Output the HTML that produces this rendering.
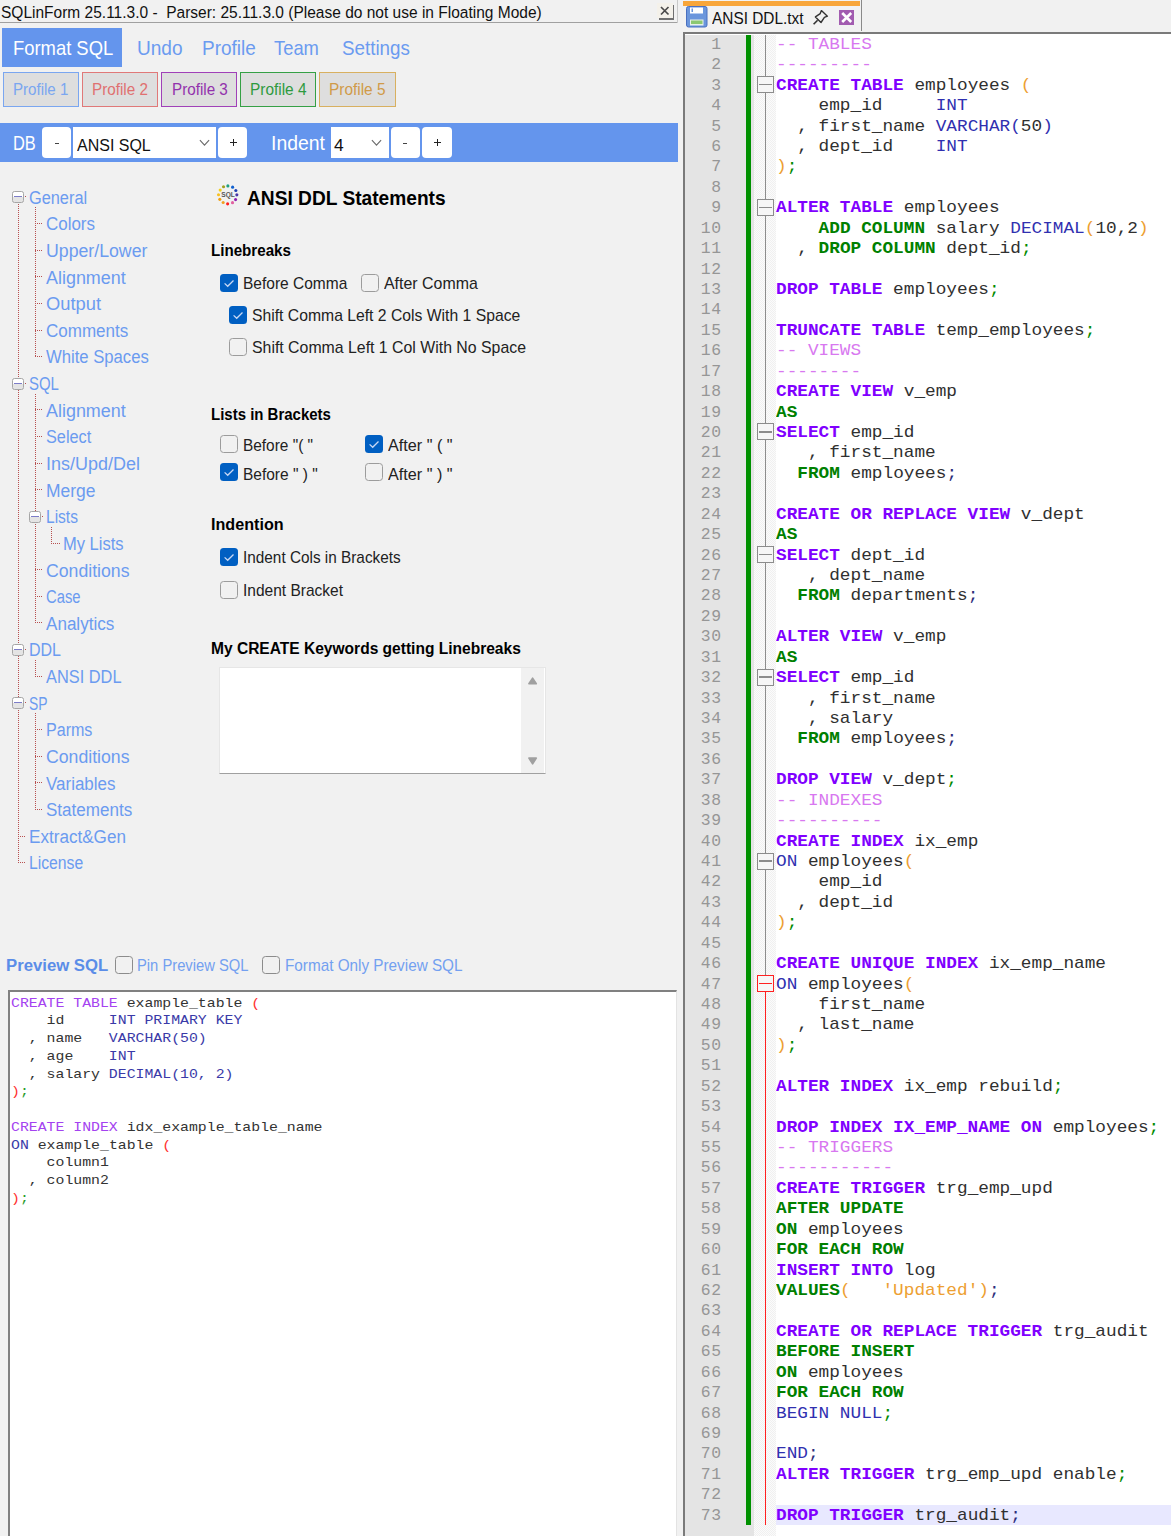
<!DOCTYPE html>
<html><head><meta charset="utf-8"><style>
html,body{margin:0;padding:0;}
body{width:1171px;height:1536px;position:relative;overflow:hidden;background:#f1f1f1;font-family:"Liberation Sans",sans-serif;}
.t{position:absolute;white-space:pre;line-height:0;transform-origin:0 0;}
.m{position:absolute;white-space:pre;line-height:0;transform-origin:0 0;font-family:"Liberation Mono",monospace;}
</style></head><body>
<div class="t" style="left:1.00px;top:13.20px;font-size:16.90px;color:#111;transform:scaleX(0.9180);">SQLinForm 25.11.3.0 -  Parser: 25.11.3.0 (Please do not use in Floating Mode)</div>
<div style="position:absolute;left:0.00px;top:22.00px;width:678.00px;height:1.00px;background:#a0a0a0"></div>
<div style="position:absolute;left:677.00px;top:0.00px;width:1.00px;height:23.00px;background:#c8c8c8"></div>
<div style="position:absolute;left:659.00px;top:5.00px;width:15.00px;height:14.50px;background:#707070"></div>
<div style="position:absolute;left:657.00px;top:3.00px;width:15.50px;height:15.00px;background:#f4f1ea"></div>
<svg style="position:absolute;left:659px;top:5px" width="12" height="12"><path d="M2 2L9.5 9.5M9.5 2L2 9.5" stroke="#4a4a4a" stroke-width="1.7"/></svg>
<div style="position:absolute;left:2.00px;top:28.00px;width:120.00px;height:38.50px;background:#6495ed"></div>
<div class="t" style="left:12.80px;top:47.80px;font-size:20.60px;color:#fff;transform:scaleX(0.8932);">Format SQL</div>
<div class="t" style="left:136.70px;top:47.90px;font-size:20.90px;color:#6b9bf0;transform:scaleX(0.9126);">Undo</div>
<div class="t" style="left:201.50px;top:47.90px;font-size:20.90px;color:#6b9bf0;transform:scaleX(0.9081);">Profile</div>
<div class="t" style="left:273.70px;top:47.90px;font-size:20.90px;color:#6b9bf0;transform:scaleX(0.8785);">Team</div>
<div class="t" style="left:341.60px;top:47.90px;font-size:20.90px;color:#6b9bf0;transform:scaleX(0.8991);">Settings</div>
<div style="position:absolute;left:3.00px;top:72.00px;width:76.00px;height:34.50px;background:#dedede;border:1.5px solid #7aa6f0;box-sizing:border-box"></div>
<div class="t" style="left:13.30px;top:89.30px;font-size:17.30px;color:#7aa6f0;transform:scaleX(0.8729);">Profile 1</div>
<div style="position:absolute;left:82.00px;top:72.00px;width:76.00px;height:34.50px;background:#dedede;border:1.5px solid #e07878;box-sizing:border-box"></div>
<div class="t" style="left:92.20px;top:89.30px;font-size:17.30px;color:#e07070;transform:scaleX(0.8824);">Profile 2</div>
<div style="position:absolute;left:161.00px;top:72.00px;width:76.00px;height:34.50px;background:#dedede;border:1.5px solid #a040b8;box-sizing:border-box"></div>
<div class="t" style="left:171.70px;top:89.30px;font-size:17.30px;color:#9232ac;transform:scaleX(0.8808);">Profile 3</div>
<div style="position:absolute;left:240.00px;top:72.00px;width:76.00px;height:34.50px;background:#dedede;border:1.5px solid #35a045;box-sizing:border-box"></div>
<div class="t" style="left:250.40px;top:89.30px;font-size:17.30px;color:#2e9a3e;transform:scaleX(0.8918);">Profile 4</div>
<div style="position:absolute;left:319.00px;top:72.00px;width:76.50px;height:34.50px;background:#dedede;border:1.5px solid #d8b060;box-sizing:border-box"></div>
<div class="t" style="left:329.00px;top:89.30px;font-size:17.30px;color:#d09a48;transform:scaleX(0.8918);">Profile 5</div>
<div style="position:absolute;left:0.00px;top:123.00px;width:678.00px;height:38.50px;background:#6495ed"></div>
<div class="t" style="left:13.00px;top:143.20px;font-size:19.60px;color:#fff;transform:scaleX(0.8374);">DB</div>
<div style="position:absolute;left:41.80px;top:127.20px;width:29.70px;height:31.30px;background:#fff;border-radius:4px"></div>
<div style="position:absolute;left:54.60px;top:143.00px;width:4.00px;height:1.20px;background:#444"></div>
<div style="position:absolute;left:73.10px;top:127.20px;width:143.20px;height:31.30px;background:#fff"></div>
<div class="t" style="left:77.20px;top:144.70px;font-size:17.40px;color:#111;transform:scaleX(0.9195);">ANSI SQL</div>
<svg style="position:absolute;left:198px;top:137px" width="13" height="10"><path d="M1.9 3.2L6.5 8.2L11.1 3.2" stroke="#6a6a6a" stroke-width="1.1" fill="none"/></svg>
<div style="position:absolute;left:218.00px;top:127.20px;width:29.40px;height:31.30px;background:#fff;border-radius:4px"></div>
<div style="position:absolute;left:230.00px;top:142.00px;width:7.00px;height:1.10px;background:#222"></div>
<div style="position:absolute;left:233.00px;top:139.00px;width:1.10px;height:7.20px;background:#222"></div>
<div class="t" style="left:271.00px;top:143.40px;font-size:20.30px;color:#fff;transform:scaleX(0.9567);">Indent</div>
<div style="position:absolute;left:331.00px;top:127.20px;width:57.80px;height:31.30px;background:#fff"></div>
<div class="t" style="left:334.00px;top:144.70px;font-size:17.40px;color:#111;">4</div>
<svg style="position:absolute;left:370px;top:137px" width="13" height="10"><path d="M1.9 3.2L6.5 8.2L11.1 3.2" stroke="#6a6a6a" stroke-width="1.1" fill="none"/></svg>
<div style="position:absolute;left:390.60px;top:127.20px;width:29.30px;height:31.30px;background:#fff;border-radius:4px"></div>
<div style="position:absolute;left:402.60px;top:143.00px;width:4.00px;height:1.20px;background:#444"></div>
<div style="position:absolute;left:422.30px;top:127.20px;width:29.70px;height:31.30px;background:#fff;border-radius:4px"></div>
<div style="position:absolute;left:434.00px;top:142.00px;width:7.00px;height:1.10px;background:#222"></div>
<div style="position:absolute;left:437.00px;top:139.00px;width:1.10px;height:7.20px;background:#222"></div>
<div class="t" style="left:29.00px;top:197.70px;font-size:18.00px;color:#6b9bf0;transform:scaleX(0.9073);">General</div>
<div class="t" style="left:45.80px;top:224.33px;font-size:18.00px;color:#6b9bf0;transform:scaleX(0.9420);">Colors</div>
<div class="t" style="left:45.80px;top:250.96px;font-size:18.00px;color:#6b9bf0;transform:scaleX(0.9839);">Upper/Lower</div>
<div class="t" style="left:45.80px;top:277.59px;font-size:18.00px;color:#6b9bf0;transform:scaleX(0.9957);">Alignment</div>
<div class="t" style="left:45.80px;top:304.22px;font-size:18.00px;color:#6b9bf0;transform:scaleX(1.0178);">Output</div>
<div class="t" style="left:45.80px;top:330.85px;font-size:18.00px;color:#6b9bf0;transform:scaleX(0.9457);">Comments</div>
<div class="t" style="left:45.80px;top:357.48px;font-size:18.00px;color:#6b9bf0;transform:scaleX(0.9257);">White Spaces</div>
<div class="t" style="left:29.00px;top:384.11px;font-size:18.00px;color:#6b9bf0;transform:scaleX(0.8301);">SQL</div>
<div class="t" style="left:45.80px;top:410.74px;font-size:18.00px;color:#6b9bf0;transform:scaleX(0.9957);">Alignment</div>
<div class="t" style="left:45.80px;top:437.37px;font-size:18.00px;color:#6b9bf0;transform:scaleX(0.9035);">Select</div>
<div class="t" style="left:45.80px;top:464.00px;font-size:18.00px;color:#6b9bf0;transform:scaleX(0.9984);">Ins/Upd/Del</div>
<div class="t" style="left:45.80px;top:490.63px;font-size:18.00px;color:#6b9bf0;transform:scaleX(0.9702);">Merge</div>
<div class="t" style="left:45.80px;top:517.26px;font-size:18.00px;color:#6b9bf0;transform:scaleX(0.8619);">Lists</div>
<div class="t" style="left:63.20px;top:543.89px;font-size:18.00px;color:#6b9bf0;transform:scaleX(0.9181);">My Lists</div>
<div class="t" style="left:45.80px;top:570.52px;font-size:18.00px;color:#6b9bf0;transform:scaleX(0.9817);">Conditions</div>
<div class="t" style="left:45.80px;top:597.15px;font-size:18.00px;color:#6b9bf0;transform:scaleX(0.8210);">Case</div>
<div class="t" style="left:45.80px;top:623.78px;font-size:18.00px;color:#6b9bf0;transform:scaleX(0.9482);">Analytics</div>
<div class="t" style="left:29.00px;top:650.41px;font-size:18.00px;color:#6b9bf0;transform:scaleX(0.8886);">DDL</div>
<div class="t" style="left:45.80px;top:677.04px;font-size:18.00px;color:#6b9bf0;transform:scaleX(0.9094);">ANSI DDL</div>
<div class="t" style="left:29.00px;top:703.67px;font-size:18.00px;color:#6b9bf0;transform:scaleX(0.7705);">SP</div>
<div class="t" style="left:45.80px;top:730.30px;font-size:18.00px;color:#6b9bf0;transform:scaleX(0.8922);">Parms</div>
<div class="t" style="left:45.80px;top:756.93px;font-size:18.00px;color:#6b9bf0;transform:scaleX(0.9817);">Conditions</div>
<div class="t" style="left:45.80px;top:783.56px;font-size:18.00px;color:#6b9bf0;transform:scaleX(0.9429);">Variables</div>
<div class="t" style="left:45.80px;top:810.19px;font-size:18.00px;color:#6b9bf0;transform:scaleX(0.9467);">Statements</div>
<div class="t" style="left:29.00px;top:836.82px;font-size:18.00px;color:#6b9bf0;transform:scaleX(0.9496);">Extract&amp;Gen</div>
<div class="t" style="left:29.00px;top:863.45px;font-size:18.00px;color:#6b9bf0;transform:scaleX(0.8736);">License</div>
<div style="position:absolute;left:35.0px;top:223.0px;width:7.8px;height:1px;background:repeating-linear-gradient(to right,#b85050 0 1px,transparent 1px 2px)"></div>
<div style="position:absolute;left:35.0px;top:250.0px;width:7.8px;height:1px;background:repeating-linear-gradient(to right,#b85050 0 1px,transparent 1px 2px)"></div>
<div style="position:absolute;left:35.0px;top:276.0px;width:7.8px;height:1px;background:repeating-linear-gradient(to right,#b85050 0 1px,transparent 1px 2px)"></div>
<div style="position:absolute;left:35.0px;top:303.0px;width:7.8px;height:1px;background:repeating-linear-gradient(to right,#b85050 0 1px,transparent 1px 2px)"></div>
<div style="position:absolute;left:35.0px;top:330.0px;width:7.8px;height:1px;background:repeating-linear-gradient(to right,#b85050 0 1px,transparent 1px 2px)"></div>
<div style="position:absolute;left:35.0px;top:356.0px;width:7.8px;height:1px;background:repeating-linear-gradient(to right,#b85050 0 1px,transparent 1px 2px)"></div>
<div style="position:absolute;left:35.0px;top:409.0px;width:7.8px;height:1px;background:repeating-linear-gradient(to right,#b85050 0 1px,transparent 1px 2px)"></div>
<div style="position:absolute;left:35.0px;top:436.0px;width:7.8px;height:1px;background:repeating-linear-gradient(to right,#b85050 0 1px,transparent 1px 2px)"></div>
<div style="position:absolute;left:35.0px;top:463.0px;width:7.8px;height:1px;background:repeating-linear-gradient(to right,#b85050 0 1px,transparent 1px 2px)"></div>
<div style="position:absolute;left:35.0px;top:489.0px;width:7.8px;height:1px;background:repeating-linear-gradient(to right,#b85050 0 1px,transparent 1px 2px)"></div>
<div style="position:absolute;left:51.0px;top:543.0px;width:9.2px;height:1px;background:repeating-linear-gradient(to right,#b85050 0 1px,transparent 1px 2px)"></div>
<div style="position:absolute;left:35.0px;top:569.0px;width:7.8px;height:1px;background:repeating-linear-gradient(to right,#b85050 0 1px,transparent 1px 2px)"></div>
<div style="position:absolute;left:35.0px;top:596.0px;width:7.8px;height:1px;background:repeating-linear-gradient(to right,#b85050 0 1px,transparent 1px 2px)"></div>
<div style="position:absolute;left:35.0px;top:622.0px;width:7.8px;height:1px;background:repeating-linear-gradient(to right,#b85050 0 1px,transparent 1px 2px)"></div>
<div style="position:absolute;left:35.0px;top:676.0px;width:7.8px;height:1px;background:repeating-linear-gradient(to right,#b85050 0 1px,transparent 1px 2px)"></div>
<div style="position:absolute;left:35.0px;top:729.0px;width:7.8px;height:1px;background:repeating-linear-gradient(to right,#b85050 0 1px,transparent 1px 2px)"></div>
<div style="position:absolute;left:35.0px;top:756.0px;width:7.8px;height:1px;background:repeating-linear-gradient(to right,#b85050 0 1px,transparent 1px 2px)"></div>
<div style="position:absolute;left:35.0px;top:782.0px;width:7.8px;height:1px;background:repeating-linear-gradient(to right,#b85050 0 1px,transparent 1px 2px)"></div>
<div style="position:absolute;left:35.0px;top:809.0px;width:7.8px;height:1px;background:repeating-linear-gradient(to right,#b85050 0 1px,transparent 1px 2px)"></div>
<div style="position:absolute;left:18.0px;top:836.0px;width:8.0px;height:1px;background:repeating-linear-gradient(to right,#b85050 0 1px,transparent 1px 2px)"></div>
<div style="position:absolute;left:18.0px;top:862.0px;width:8.0px;height:1px;background:repeating-linear-gradient(to right,#b85050 0 1px,transparent 1px 2px)"></div>
<div style="position:absolute;left:18.0px;top:202.0px;width:1px;height:661.0px;background:repeating-linear-gradient(to bottom,#b85050 0 1px,transparent 1px 2px)"></div>
<div style="position:absolute;left:35.0px;top:207.0px;width:1px;height:150.0px;background:repeating-linear-gradient(to bottom,#b85050 0 1px,transparent 1px 2px)"></div>
<div style="position:absolute;left:35.0px;top:394.0px;width:1px;height:229.0px;background:repeating-linear-gradient(to bottom,#b85050 0 1px,transparent 1px 2px)"></div>
<div style="position:absolute;left:35.0px;top:660.0px;width:1px;height:17.0px;background:repeating-linear-gradient(to bottom,#b85050 0 1px,transparent 1px 2px)"></div>
<div style="position:absolute;left:35.0px;top:713.0px;width:1px;height:97.0px;background:repeating-linear-gradient(to bottom,#b85050 0 1px,transparent 1px 2px)"></div>
<div style="position:absolute;left:51.0px;top:527.0px;width:1px;height:17.0px;background:repeating-linear-gradient(to bottom,#b85050 0 1px,transparent 1px 2px)"></div>
<div style="position:absolute;left:23.0px;top:196.0px;width:3.0px;height:1px;background:repeating-linear-gradient(to right,#b85050 0 1px,transparent 1px 2px)"></div>
<div style="position:absolute;left:12.3px;top:191.0px;width:11.5px;height:11.7px;border:1.3px solid #a6a6a6;border-radius:2.5px;box-sizing:border-box;background:linear-gradient(#fff 0 50%,#e4e4e4 50% 100%)"></div>
<div style="position:absolute;left:14.20px;top:195.90px;width:7.70px;height:1.30px;background:#7c7cc8"></div>
<div style="position:absolute;left:23.0px;top:383.0px;width:3.0px;height:1px;background:repeating-linear-gradient(to right,#b85050 0 1px,transparent 1px 2px)"></div>
<div style="position:absolute;left:12.3px;top:378.0px;width:11.5px;height:11.7px;border:1.3px solid #a6a6a6;border-radius:2.5px;box-sizing:border-box;background:linear-gradient(#fff 0 50%,#e4e4e4 50% 100%)"></div>
<div style="position:absolute;left:14.20px;top:382.90px;width:7.70px;height:1.30px;background:#7c7cc8"></div>
<div style="position:absolute;left:40.0px;top:516.0px;width:2.8px;height:1px;background:repeating-linear-gradient(to right,#b85050 0 1px,transparent 1px 2px)"></div>
<div style="position:absolute;left:29.3px;top:511.0px;width:11.5px;height:11.7px;border:1.3px solid #a6a6a6;border-radius:2.5px;box-sizing:border-box;background:linear-gradient(#fff 0 50%,#e4e4e4 50% 100%)"></div>
<div style="position:absolute;left:31.20px;top:515.90px;width:7.70px;height:1.30px;background:#7c7cc8"></div>
<div style="position:absolute;left:23.0px;top:649.0px;width:3.0px;height:1px;background:repeating-linear-gradient(to right,#b85050 0 1px,transparent 1px 2px)"></div>
<div style="position:absolute;left:12.3px;top:644.0px;width:11.5px;height:11.7px;border:1.3px solid #a6a6a6;border-radius:2.5px;box-sizing:border-box;background:linear-gradient(#fff 0 50%,#e4e4e4 50% 100%)"></div>
<div style="position:absolute;left:14.20px;top:648.90px;width:7.70px;height:1.30px;background:#7c7cc8"></div>
<div style="position:absolute;left:23.0px;top:702.0px;width:3.0px;height:1px;background:repeating-linear-gradient(to right,#b85050 0 1px,transparent 1px 2px)"></div>
<div style="position:absolute;left:12.3px;top:697.0px;width:11.5px;height:11.7px;border:1.3px solid #a6a6a6;border-radius:2.5px;box-sizing:border-box;background:linear-gradient(#fff 0 50%,#e4e4e4 50% 100%)"></div>
<div style="position:absolute;left:14.20px;top:701.90px;width:7.70px;height:1.30px;background:#7c7cc8"></div>
<svg style="position:absolute;left:212px;top:180px" width="30" height="30" viewBox="0 0 30 30"><circle cx="15.89" cy="5.89" r="1.55" fill="#20a080"/><circle cx="20.63" cy="7.17" r="1.55" fill="#1060d0"/><circle cx="23.83" cy="10.50" r="1.55" fill="#2040b0"/><circle cx="24.85" cy="14.86" r="1.55" fill="#4a3aa8"/><circle cx="23.57" cy="19.60" r="1.55" fill="#9020b0"/><circle cx="20.50" cy="22.67" r="1.55" fill="#e060a0"/><circle cx="15.63" cy="23.83" r="1.55" fill="#ff2020"/><circle cx="11.15" cy="22.55" r="1.55" fill="#f0a020"/><circle cx="7.81" cy="19.34" r="1.55" fill="#f0a010"/><circle cx="6.53" cy="14.73" r="1.55" fill="#f8c020"/><circle cx="8.20" cy="10.12" r="1.55" fill="#f0d020"/><circle cx="11.53" cy="6.79" r="1.55" fill="#a0a020"/><text x="16.14" y="17.04" font-size="6.6" font-weight="bold" text-anchor="middle" font-family="Liberation Sans" fill="#555">SQL</text></svg>
<div class="t" style="left:246.60px;top:197.70px;font-size:20.60px;color:#000;font-weight:bold;transform:scaleX(0.9299);">ANSI DDL Statements</div>
<div class="t" style="left:211.10px;top:251.40px;font-size:16.00px;color:#000;font-weight:bold;transform:scaleX(0.9457);">Linebreaks</div>
<div style="position:absolute;left:220.1px;top:274.3px;width:18px;height:18px;border-radius:3.5px;background:#005fc2"><svg width="18" height="18" style="position:absolute;left:0;top:0"><path d="M4.6 9.4L7.7 12.3L13.5 6.5" stroke="#c8d8f4" stroke-width="1.3" fill="none"/></svg></div>
<div class="t" style="left:243.30px;top:283.60px;font-size:17.00px;color:#222;transform:scaleX(0.9123);">Before Comma</div>
<div style="position:absolute;left:360.7px;top:274.3px;width:18px;height:18px;border-radius:3.5px;border:1.4px solid #9c9c9c;box-sizing:border-box"></div>
<div class="t" style="left:383.80px;top:283.60px;font-size:17.00px;color:#222;transform:scaleX(0.9367);">After Comma</div>
<div style="position:absolute;left:228.9px;top:306.1px;width:18px;height:18px;border-radius:3.5px;background:#005fc2"><svg width="18" height="18" style="position:absolute;left:0;top:0"><path d="M4.6 9.4L7.7 12.3L13.5 6.5" stroke="#c8d8f4" stroke-width="1.3" fill="none"/></svg></div>
<div class="t" style="left:251.70px;top:316.40px;font-size:17.00px;color:#222;transform:scaleX(0.9249);">Shift Comma Left 2 Cols With 1 Space</div>
<div style="position:absolute;left:228.9px;top:338.0px;width:18px;height:18px;border-radius:3.5px;border:1.4px solid #9c9c9c;box-sizing:border-box"></div>
<div class="t" style="left:251.70px;top:348.20px;font-size:17.00px;color:#222;transform:scaleX(0.9324);">Shift Comma Left 1 Col With No Space</div>
<div class="t" style="left:211.40px;top:414.60px;font-size:16.00px;color:#000;font-weight:bold;transform:scaleX(0.9363);">Lists in Brackets</div>
<div style="position:absolute;left:220.3px;top:434.8px;width:18px;height:18px;border-radius:3.5px;border:1.4px solid #9c9c9c;box-sizing:border-box"></div>
<div class="t" style="left:243.00px;top:446.30px;font-size:17.00px;color:#222;transform:scaleX(0.9060);">Before &quot;( &quot;</div>
<div style="position:absolute;left:365.1px;top:434.8px;width:18px;height:18px;border-radius:3.5px;background:#005fc2"><svg width="18" height="18" style="position:absolute;left:0;top:0"><path d="M4.6 9.4L7.7 12.3L13.5 6.5" stroke="#c8d8f4" stroke-width="1.3" fill="none"/></svg></div>
<div class="t" style="left:387.50px;top:446.30px;font-size:17.00px;color:#222;transform:scaleX(0.9513);">After &quot; ( &quot;</div>
<div style="position:absolute;left:220.3px;top:463.1px;width:18px;height:18px;border-radius:3.5px;background:#005fc2"><svg width="18" height="18" style="position:absolute;left:0;top:0"><path d="M4.6 9.4L7.7 12.3L13.5 6.5" stroke="#c8d8f4" stroke-width="1.3" fill="none"/></svg></div>
<div class="t" style="left:243.00px;top:474.50px;font-size:17.00px;color:#222;transform:scaleX(0.9111);">Before &quot; ) &quot;</div>
<div style="position:absolute;left:365.1px;top:463.1px;width:18px;height:18px;border-radius:3.5px;border:1.4px solid #9c9c9c;box-sizing:border-box"></div>
<div class="t" style="left:387.50px;top:474.50px;font-size:17.00px;color:#222;transform:scaleX(0.9513);">After &quot; ) &quot;</div>
<div class="t" style="left:211.40px;top:525.30px;font-size:16.00px;color:#000;font-weight:bold;transform:scaleX(1.0085);">Indention</div>
<div style="position:absolute;left:220.3px;top:547.6px;width:18px;height:18px;border-radius:3.5px;background:#005fc2"><svg width="18" height="18" style="position:absolute;left:0;top:0"><path d="M4.6 9.4L7.7 12.3L13.5 6.5" stroke="#c8d8f4" stroke-width="1.3" fill="none"/></svg></div>
<div class="t" style="left:243.00px;top:558.20px;font-size:17.00px;color:#222;transform:scaleX(0.9021);">Indent Cols in Brackets</div>
<div style="position:absolute;left:220.3px;top:580.5px;width:18px;height:18px;border-radius:3.5px;border:1.4px solid #9c9c9c;box-sizing:border-box"></div>
<div class="t" style="left:243.00px;top:590.70px;font-size:17.00px;color:#222;transform:scaleX(0.9122);">Indent Bracket</div>
<div class="t" style="left:211.40px;top:649.20px;font-size:16.00px;color:#000;font-weight:bold;transform:scaleX(0.9715);">My CREATE Keywords getting Linebreaks</div>
<div style="position:absolute;left:219.00px;top:667.00px;width:326.50px;height:106.80px;background:#fff;border:1px solid #e6e6e6;border-bottom:1px solid #a0a0a0;box-sizing:border-box"></div>
<div style="position:absolute;left:521.20px;top:668.00px;width:23.30px;height:104.80px;background:#f1f1f1"></div>
<svg style="position:absolute;left:527px;top:675px" width="12" height="92"><path d="M1.9 8.8L5.6 3.2L9.3 8.8Z" fill="#a0a0a0" stroke="#a0a0a0" stroke-width="1.6" stroke-linejoin="round"/><path d="M1.9 83.1L5.6 88.9L9.3 83.1Z" fill="#a0a0a0" stroke="#a0a0a0" stroke-width="1.6" stroke-linejoin="round"/></svg>
<div class="t" style="left:5.70px;top:965.10px;font-size:17.40px;color:#5b8de8;font-weight:bold;transform:scaleX(0.9616);">Preview SQL</div>
<div style="position:absolute;left:114.5px;top:955.8px;width:18px;height:18px;border-radius:3.5px;border:1.5px solid #8c8c8c;box-sizing:border-box"></div>
<div class="t" style="left:137.30px;top:965.90px;font-size:17.00px;color:#73a0f0;transform:scaleX(0.8677);">Pin Preview SQL</div>
<div style="position:absolute;left:262.3px;top:955.8px;width:18px;height:18px;border-radius:3.5px;border:1.5px solid #8c8c8c;box-sizing:border-box"></div>
<div class="t" style="left:284.80px;top:965.90px;font-size:17.00px;color:#73a0f0;transform:scaleX(0.8990);">Format Only Preview SQL</div>
<div style="position:absolute;left:8.00px;top:990.00px;width:669.00px;height:546.00px;background:#fff;border-left:2px solid #808080;border-top:2px solid #808080;border-right:1px solid #e3e3e3;box-sizing:border-box"></div>
<div class="m" style="left:10.5px;top:1003.50px;font-size:13.60px;transform:scaleX(1.0907)"><span style="color:#a442f0">CREATE TABLE</span><span style="color:#333"> example_table </span><span style="color:#ff3030">(</span></div>
<div class="m" style="left:10.5px;top:1021.26px;font-size:13.60px;transform:scaleX(1.0907)"><span style="color:#333">    id     </span><span style="color:#3a3aa8">INT PRIMARY KEY</span></div>
<div class="m" style="left:10.5px;top:1039.02px;font-size:13.60px;transform:scaleX(1.0907)"><span style="color:#333">  , name   </span><span style="color:#3a3aa8">VARCHAR(50)</span></div>
<div class="m" style="left:10.5px;top:1056.78px;font-size:13.60px;transform:scaleX(1.0907)"><span style="color:#333">  , age    </span><span style="color:#3a3aa8">INT</span></div>
<div class="m" style="left:10.5px;top:1074.54px;font-size:13.60px;transform:scaleX(1.0907)"><span style="color:#333">  , salary </span><span style="color:#3a3aa8">DECIMAL(10, 2)</span></div>
<div class="m" style="left:10.5px;top:1092.30px;font-size:13.60px;transform:scaleX(1.0907)"><span style="color:#ff3030">)</span><span style="color:#2a9a2a">;</span></div>
<div class="m" style="left:10.5px;top:1110.06px;font-size:13.60px;transform:scaleX(1.0907)"></div>
<div class="m" style="left:10.5px;top:1127.82px;font-size:13.60px;transform:scaleX(1.0907)"><span style="color:#a442f0">CREATE INDEX</span><span style="color:#333"> idx_example_table_name</span></div>
<div class="m" style="left:10.5px;top:1145.58px;font-size:13.60px;transform:scaleX(1.0907)"><span style="color:#3a3aa8">ON</span><span style="color:#333"> example_table </span><span style="color:#ff3030">(</span></div>
<div class="m" style="left:10.5px;top:1163.34px;font-size:13.60px;transform:scaleX(1.0907)"><span style="color:#333">    column1</span></div>
<div class="m" style="left:10.5px;top:1181.10px;font-size:13.60px;transform:scaleX(1.0907)"><span style="color:#333">  , column2</span></div>
<div class="m" style="left:10.5px;top:1198.86px;font-size:13.60px;transform:scaleX(1.0907)"><span style="color:#ff3030">)</span><span style="color:#2a9a2a">;</span></div>
<div style="position:absolute;left:678.00px;top:0.00px;width:493.00px;height:33.00px;background:#f1f1f1"></div>
<div style="position:absolute;left:683.00px;top:0.00px;width:179.00px;height:31.00px;background:#f2f2f2;border-right:1.6px solid #8a8a8a;box-sizing:border-box"></div>
<div style="position:absolute;left:683.00px;top:0.50px;width:177.00px;height:5.10px;background:#f8a63a"></div>
<svg style="position:absolute;left:686px;top:6px" width="22" height="22" viewBox="0 0 22 22"><rect x="0.5" y="0.5" width="20.5" height="20.5" rx="2" fill="#6b96dc" stroke="#4a70c0"/><rect x="4" y="1.5" width="13" height="6" fill="#fff"/><rect x="5.5" y="2.5" width="1.5" height="3.5" fill="#6b96dc"/><rect x="4" y="13.5" width="13.5" height="6" fill="#e8f0e8"/><rect x="5" y="14.5" width="11.5" height="3.5" fill="#8cc870"/></svg>
<div class="t" style="left:711.50px;top:19.00px;font-size:17.00px;color:#111;transform:scaleX(0.9052);">ANSI DDL.txt</div>
<svg style="position:absolute;left:805px;top:3px" width="30" height="30" viewBox="0 0 30 30"><path d="M16.4 7.6L22.4 13.2L19.4 14.4L16 19.5L10.4 13.9L15.2 10.6Z" stroke="#333" stroke-width="1.4" fill="none" stroke-linejoin="round"/><path d="M12.6 17.2L8.6 21.3" stroke="#333" stroke-width="1.6"/></svg>
<div style="position:absolute;left:839.00px;top:9.90px;width:14.70px;height:14.90px;background:#a25cb0"></div>
<svg style="position:absolute;left:839px;top:9.9px" width="15" height="15"><path d="M3.2 3L12.2 12M12.2 3L3.2 12" stroke="#fff" stroke-width="2.6"/></svg>
<div style="position:absolute;left:683.00px;top:31.60px;width:488.00px;height:1504.40px;background:#fff;border-left:2px solid #7a7a7a;border-top:2px solid #7a7a7a;box-sizing:border-box"></div>
<div style="position:absolute;left:685.00px;top:34.50px;width:69.00px;height:1501.50px;background:#e4e4e4"></div>
<div style="position:absolute;left:754.00px;top:34.50px;width:22.00px;height:1501.50px;background:repeating-conic-gradient(#f0f0f0 0 25%,#fbfbfb 0 50%) 0 0/2px 2px"></div>
<div style="position:absolute;left:746.00px;top:34.50px;width:5.00px;height:1490.49px;background:#009100"></div>
<div style="position:absolute;left:776.00px;top:1504.56px;width:395.00px;height:20.43px;background:#e8e8ff"></div>
<div style="position:absolute;left:765.00px;top:34.50px;width:1.00px;height:949.10px;background:#8c8c8c"></div>
<div style="position:absolute;left:765.00px;top:983.60px;width:1.00px;height:541.39px;background:#ff2020"></div>
<div style="position:absolute;left:756.8px;top:76.18px;width:17px;height:17px;border:1px solid #8c8c8c;background:#f6f6f6;box-sizing:border-box"></div>
<div style="position:absolute;left:758.80px;top:83.98px;width:13.00px;height:1.50px;background:#8c8c8c"></div>
<div style="position:absolute;left:756.8px;top:198.75px;width:17px;height:17px;border:1px solid #8c8c8c;background:#f6f6f6;box-sizing:border-box"></div>
<div style="position:absolute;left:758.80px;top:206.56px;width:13.00px;height:1.50px;background:#8c8c8c"></div>
<div style="position:absolute;left:756.8px;top:423.49px;width:17px;height:17px;border:1px solid #8c8c8c;background:#f6f6f6;box-sizing:border-box"></div>
<div style="position:absolute;left:758.80px;top:431.29px;width:13.00px;height:1.50px;background:#8c8c8c"></div>
<div style="position:absolute;left:756.8px;top:546.07px;width:17px;height:17px;border:1px solid #8c8c8c;background:#f6f6f6;box-sizing:border-box"></div>
<div style="position:absolute;left:758.80px;top:553.87px;width:13.00px;height:1.50px;background:#8c8c8c"></div>
<div style="position:absolute;left:756.8px;top:668.65px;width:17px;height:17px;border:1px solid #8c8c8c;background:#f6f6f6;box-sizing:border-box"></div>
<div style="position:absolute;left:758.80px;top:676.45px;width:13.00px;height:1.50px;background:#8c8c8c"></div>
<div style="position:absolute;left:756.8px;top:852.52px;width:17px;height:17px;border:1px solid #8c8c8c;background:#f6f6f6;box-sizing:border-box"></div>
<div style="position:absolute;left:758.80px;top:860.32px;width:13.00px;height:1.50px;background:#8c8c8c"></div>
<div style="position:absolute;left:756.8px;top:975.10px;width:17px;height:17px;border:1px solid #ff2020;background:#f6f6f6;box-sizing:border-box"></div>
<div style="position:absolute;left:758.80px;top:982.89px;width:13.00px;height:1.50px;background:#ff2020"></div>
<div class="m" style="left:690px;width:32px;text-align:right;top:44.80px;font-size:16.40px;letter-spacing:0.810px;color:#969696">1</div>
<div class="m" style="left:776px;top:44.80px;font-size:16.40px;transform:scaleX(1.0823)"><span style="color:#d878f0">-- TABLES</span></div>
<div class="m" style="left:690px;width:32px;text-align:right;top:65.23px;font-size:16.40px;letter-spacing:0.810px;color:#969696">2</div>
<div class="m" style="left:776px;top:65.23px;font-size:16.40px;transform:scaleX(1.0823)"><span style="color:#d878f0">---------</span></div>
<div class="m" style="left:690px;width:32px;text-align:right;top:85.66px;font-size:16.40px;letter-spacing:0.810px;color:#969696">3</div>
<div class="m" style="left:776px;top:85.66px;font-size:16.40px;transform:scaleX(1.0823)"><span style="color:#8000ff;font-weight:bold">CREATE TABLE</span><span style="color:#303030"> employees </span><span style="color:#eda032">(</span></div>
<div class="m" style="left:690px;width:32px;text-align:right;top:106.09px;font-size:16.40px;letter-spacing:0.810px;color:#969696">4</div>
<div class="m" style="left:776px;top:106.09px;font-size:16.40px;transform:scaleX(1.0823)"><span style="color:#303030">    emp_id     </span><span style="color:#3030b0">INT</span></div>
<div class="m" style="left:690px;width:32px;text-align:right;top:126.52px;font-size:16.40px;letter-spacing:0.810px;color:#969696">5</div>
<div class="m" style="left:776px;top:126.52px;font-size:16.40px;transform:scaleX(1.0823)"><span style="color:#303030">  , first_name </span><span style="color:#3030b0">VARCHAR(</span><span style="color:#303030">50</span><span style="color:#3030b0">)</span></div>
<div class="m" style="left:690px;width:32px;text-align:right;top:146.95px;font-size:16.40px;letter-spacing:0.810px;color:#969696">6</div>
<div class="m" style="left:776px;top:146.95px;font-size:16.40px;transform:scaleX(1.0823)"><span style="color:#303030">  , dept_id    </span><span style="color:#3030b0">INT</span></div>
<div class="m" style="left:690px;width:32px;text-align:right;top:167.38px;font-size:16.40px;letter-spacing:0.810px;color:#969696">7</div>
<div class="m" style="left:776px;top:167.38px;font-size:16.40px;transform:scaleX(1.0823)"><span style="color:#eda032">)</span><span style="color:#008a00">;</span></div>
<div class="m" style="left:690px;width:32px;text-align:right;top:187.81px;font-size:16.40px;letter-spacing:0.810px;color:#969696">8</div>
<div class="m" style="left:690px;width:32px;text-align:right;top:208.24px;font-size:16.40px;letter-spacing:0.810px;color:#969696">9</div>
<div class="m" style="left:776px;top:208.24px;font-size:16.40px;transform:scaleX(1.0823)"><span style="color:#8000ff;font-weight:bold">ALTER TABLE</span><span style="color:#303030"> employees</span></div>
<div class="m" style="left:690px;width:32px;text-align:right;top:228.67px;font-size:16.40px;letter-spacing:0.810px;color:#969696">10</div>
<div class="m" style="left:776px;top:228.67px;font-size:16.40px;transform:scaleX(1.0823)"><span style="color:#303030">    </span><span style="color:#008000;font-weight:bold">ADD COLUMN</span><span style="color:#303030"> salary </span><span style="color:#3030b0">DECIMAL</span><span style="color:#eda032">(</span><span style="color:#303030">10,2</span><span style="color:#eda032">)</span></div>
<div class="m" style="left:690px;width:32px;text-align:right;top:249.10px;font-size:16.40px;letter-spacing:0.810px;color:#969696">11</div>
<div class="m" style="left:776px;top:249.10px;font-size:16.40px;transform:scaleX(1.0823)"><span style="color:#303030">  , </span><span style="color:#008000;font-weight:bold">DROP COLUMN</span><span style="color:#303030"> dept_id</span><span style="color:#008a00">;</span></div>
<div class="m" style="left:690px;width:32px;text-align:right;top:269.53px;font-size:16.40px;letter-spacing:0.810px;color:#969696">12</div>
<div class="m" style="left:690px;width:32px;text-align:right;top:289.96px;font-size:16.40px;letter-spacing:0.810px;color:#969696">13</div>
<div class="m" style="left:776px;top:289.96px;font-size:16.40px;transform:scaleX(1.0823)"><span style="color:#8000ff;font-weight:bold">DROP TABLE</span><span style="color:#303030"> employees</span><span style="color:#008a00">;</span></div>
<div class="m" style="left:690px;width:32px;text-align:right;top:310.39px;font-size:16.40px;letter-spacing:0.810px;color:#969696">14</div>
<div class="m" style="left:690px;width:32px;text-align:right;top:330.82px;font-size:16.40px;letter-spacing:0.810px;color:#969696">15</div>
<div class="m" style="left:776px;top:330.82px;font-size:16.40px;transform:scaleX(1.0823)"><span style="color:#8000ff;font-weight:bold">TRUNCATE TABLE</span><span style="color:#303030"> temp_employees</span><span style="color:#008a00">;</span></div>
<div class="m" style="left:690px;width:32px;text-align:right;top:351.25px;font-size:16.40px;letter-spacing:0.810px;color:#969696">16</div>
<div class="m" style="left:776px;top:351.25px;font-size:16.40px;transform:scaleX(1.0823)"><span style="color:#d878f0">-- VIEWS</span></div>
<div class="m" style="left:690px;width:32px;text-align:right;top:371.68px;font-size:16.40px;letter-spacing:0.810px;color:#969696">17</div>
<div class="m" style="left:776px;top:371.68px;font-size:16.40px;transform:scaleX(1.0823)"><span style="color:#d878f0">--------</span></div>
<div class="m" style="left:690px;width:32px;text-align:right;top:392.11px;font-size:16.40px;letter-spacing:0.810px;color:#969696">18</div>
<div class="m" style="left:776px;top:392.11px;font-size:16.40px;transform:scaleX(1.0823)"><span style="color:#8000ff;font-weight:bold">CREATE VIEW</span><span style="color:#303030"> v_emp</span></div>
<div class="m" style="left:690px;width:32px;text-align:right;top:412.54px;font-size:16.40px;letter-spacing:0.810px;color:#969696">19</div>
<div class="m" style="left:776px;top:412.54px;font-size:16.40px;transform:scaleX(1.0823)"><span style="color:#008000;font-weight:bold">AS</span></div>
<div class="m" style="left:690px;width:32px;text-align:right;top:432.97px;font-size:16.40px;letter-spacing:0.810px;color:#969696">20</div>
<div class="m" style="left:776px;top:432.97px;font-size:16.40px;transform:scaleX(1.0823)"><span style="color:#8000ff;font-weight:bold">SELECT</span><span style="color:#303030"> emp_id</span></div>
<div class="m" style="left:690px;width:32px;text-align:right;top:453.40px;font-size:16.40px;letter-spacing:0.810px;color:#969696">21</div>
<div class="m" style="left:776px;top:453.40px;font-size:16.40px;transform:scaleX(1.0823)"><span style="color:#303030">   , first_name</span></div>
<div class="m" style="left:690px;width:32px;text-align:right;top:473.83px;font-size:16.40px;letter-spacing:0.810px;color:#969696">22</div>
<div class="m" style="left:776px;top:473.83px;font-size:16.40px;transform:scaleX(1.0823)"><span style="color:#303030">  </span><span style="color:#008000;font-weight:bold">FROM</span><span style="color:#303030"> employees</span><span style="color:#2d2d7a">;</span></div>
<div class="m" style="left:690px;width:32px;text-align:right;top:494.26px;font-size:16.40px;letter-spacing:0.810px;color:#969696">23</div>
<div class="m" style="left:690px;width:32px;text-align:right;top:514.69px;font-size:16.40px;letter-spacing:0.810px;color:#969696">24</div>
<div class="m" style="left:776px;top:514.69px;font-size:16.40px;transform:scaleX(1.0823)"><span style="color:#8000ff;font-weight:bold">CREATE OR REPLACE VIEW</span><span style="color:#303030"> v_dept</span></div>
<div class="m" style="left:690px;width:32px;text-align:right;top:535.12px;font-size:16.40px;letter-spacing:0.810px;color:#969696">25</div>
<div class="m" style="left:776px;top:535.12px;font-size:16.40px;transform:scaleX(1.0823)"><span style="color:#008000;font-weight:bold">AS</span></div>
<div class="m" style="left:690px;width:32px;text-align:right;top:555.55px;font-size:16.40px;letter-spacing:0.810px;color:#969696">26</div>
<div class="m" style="left:776px;top:555.55px;font-size:16.40px;transform:scaleX(1.0823)"><span style="color:#8000ff;font-weight:bold">SELECT</span><span style="color:#303030"> dept_id</span></div>
<div class="m" style="left:690px;width:32px;text-align:right;top:575.98px;font-size:16.40px;letter-spacing:0.810px;color:#969696">27</div>
<div class="m" style="left:776px;top:575.98px;font-size:16.40px;transform:scaleX(1.0823)"><span style="color:#303030">   , dept_name</span></div>
<div class="m" style="left:690px;width:32px;text-align:right;top:596.41px;font-size:16.40px;letter-spacing:0.810px;color:#969696">28</div>
<div class="m" style="left:776px;top:596.41px;font-size:16.40px;transform:scaleX(1.0823)"><span style="color:#303030">  </span><span style="color:#008000;font-weight:bold">FROM</span><span style="color:#303030"> departments</span><span style="color:#2d2d7a">;</span></div>
<div class="m" style="left:690px;width:32px;text-align:right;top:616.84px;font-size:16.40px;letter-spacing:0.810px;color:#969696">29</div>
<div class="m" style="left:690px;width:32px;text-align:right;top:637.27px;font-size:16.40px;letter-spacing:0.810px;color:#969696">30</div>
<div class="m" style="left:776px;top:637.27px;font-size:16.40px;transform:scaleX(1.0823)"><span style="color:#8000ff;font-weight:bold">ALTER VIEW</span><span style="color:#303030"> v_emp</span></div>
<div class="m" style="left:690px;width:32px;text-align:right;top:657.70px;font-size:16.40px;letter-spacing:0.810px;color:#969696">31</div>
<div class="m" style="left:776px;top:657.70px;font-size:16.40px;transform:scaleX(1.0823)"><span style="color:#008000;font-weight:bold">AS</span></div>
<div class="m" style="left:690px;width:32px;text-align:right;top:678.13px;font-size:16.40px;letter-spacing:0.810px;color:#969696">32</div>
<div class="m" style="left:776px;top:678.13px;font-size:16.40px;transform:scaleX(1.0823)"><span style="color:#8000ff;font-weight:bold">SELECT</span><span style="color:#303030"> emp_id</span></div>
<div class="m" style="left:690px;width:32px;text-align:right;top:698.56px;font-size:16.40px;letter-spacing:0.810px;color:#969696">33</div>
<div class="m" style="left:776px;top:698.56px;font-size:16.40px;transform:scaleX(1.0823)"><span style="color:#303030">   , first_name</span></div>
<div class="m" style="left:690px;width:32px;text-align:right;top:718.99px;font-size:16.40px;letter-spacing:0.810px;color:#969696">34</div>
<div class="m" style="left:776px;top:718.99px;font-size:16.40px;transform:scaleX(1.0823)"><span style="color:#303030">   , salary</span></div>
<div class="m" style="left:690px;width:32px;text-align:right;top:739.42px;font-size:16.40px;letter-spacing:0.810px;color:#969696">35</div>
<div class="m" style="left:776px;top:739.42px;font-size:16.40px;transform:scaleX(1.0823)"><span style="color:#303030">  </span><span style="color:#008000;font-weight:bold">FROM</span><span style="color:#303030"> employees</span><span style="color:#2d2d7a">;</span></div>
<div class="m" style="left:690px;width:32px;text-align:right;top:759.85px;font-size:16.40px;letter-spacing:0.810px;color:#969696">36</div>
<div class="m" style="left:690px;width:32px;text-align:right;top:780.28px;font-size:16.40px;letter-spacing:0.810px;color:#969696">37</div>
<div class="m" style="left:776px;top:780.28px;font-size:16.40px;transform:scaleX(1.0823)"><span style="color:#8000ff;font-weight:bold">DROP VIEW</span><span style="color:#303030"> v_dept</span><span style="color:#008a00">;</span></div>
<div class="m" style="left:690px;width:32px;text-align:right;top:800.71px;font-size:16.40px;letter-spacing:0.810px;color:#969696">38</div>
<div class="m" style="left:776px;top:800.71px;font-size:16.40px;transform:scaleX(1.0823)"><span style="color:#d878f0">-- INDEXES</span></div>
<div class="m" style="left:690px;width:32px;text-align:right;top:821.14px;font-size:16.40px;letter-spacing:0.810px;color:#969696">39</div>
<div class="m" style="left:776px;top:821.14px;font-size:16.40px;transform:scaleX(1.0823)"><span style="color:#d878f0">----------</span></div>
<div class="m" style="left:690px;width:32px;text-align:right;top:841.57px;font-size:16.40px;letter-spacing:0.810px;color:#969696">40</div>
<div class="m" style="left:776px;top:841.57px;font-size:16.40px;transform:scaleX(1.0823)"><span style="color:#8000ff;font-weight:bold">CREATE INDEX</span><span style="color:#303030"> ix_emp</span></div>
<div class="m" style="left:690px;width:32px;text-align:right;top:862.00px;font-size:16.40px;letter-spacing:0.810px;color:#969696">41</div>
<div class="m" style="left:776px;top:862.00px;font-size:16.40px;transform:scaleX(1.0823)"><span style="color:#3030b0">ON</span><span style="color:#303030"> employees</span><span style="color:#eda032">(</span></div>
<div class="m" style="left:690px;width:32px;text-align:right;top:882.43px;font-size:16.40px;letter-spacing:0.810px;color:#969696">42</div>
<div class="m" style="left:776px;top:882.43px;font-size:16.40px;transform:scaleX(1.0823)"><span style="color:#303030">    emp_id</span></div>
<div class="m" style="left:690px;width:32px;text-align:right;top:902.86px;font-size:16.40px;letter-spacing:0.810px;color:#969696">43</div>
<div class="m" style="left:776px;top:902.86px;font-size:16.40px;transform:scaleX(1.0823)"><span style="color:#303030">  , dept_id</span></div>
<div class="m" style="left:690px;width:32px;text-align:right;top:923.29px;font-size:16.40px;letter-spacing:0.810px;color:#969696">44</div>
<div class="m" style="left:776px;top:923.29px;font-size:16.40px;transform:scaleX(1.0823)"><span style="color:#eda032">)</span><span style="color:#008a00">;</span></div>
<div class="m" style="left:690px;width:32px;text-align:right;top:943.72px;font-size:16.40px;letter-spacing:0.810px;color:#969696">45</div>
<div class="m" style="left:690px;width:32px;text-align:right;top:964.15px;font-size:16.40px;letter-spacing:0.810px;color:#969696">46</div>
<div class="m" style="left:776px;top:964.15px;font-size:16.40px;transform:scaleX(1.0823)"><span style="color:#8000ff;font-weight:bold">CREATE UNIQUE INDEX</span><span style="color:#303030"> ix_emp_name</span></div>
<div class="m" style="left:690px;width:32px;text-align:right;top:984.58px;font-size:16.40px;letter-spacing:0.810px;color:#969696">47</div>
<div class="m" style="left:776px;top:984.58px;font-size:16.40px;transform:scaleX(1.0823)"><span style="color:#3030b0">ON</span><span style="color:#303030"> employees</span><span style="color:#eda032">(</span></div>
<div class="m" style="left:690px;width:32px;text-align:right;top:1005.01px;font-size:16.40px;letter-spacing:0.810px;color:#969696">48</div>
<div class="m" style="left:776px;top:1005.01px;font-size:16.40px;transform:scaleX(1.0823)"><span style="color:#303030">    first_name</span></div>
<div class="m" style="left:690px;width:32px;text-align:right;top:1025.44px;font-size:16.40px;letter-spacing:0.810px;color:#969696">49</div>
<div class="m" style="left:776px;top:1025.44px;font-size:16.40px;transform:scaleX(1.0823)"><span style="color:#303030">  , last_name</span></div>
<div class="m" style="left:690px;width:32px;text-align:right;top:1045.87px;font-size:16.40px;letter-spacing:0.810px;color:#969696">50</div>
<div class="m" style="left:776px;top:1045.87px;font-size:16.40px;transform:scaleX(1.0823)"><span style="color:#eda032">)</span><span style="color:#008a00">;</span></div>
<div class="m" style="left:690px;width:32px;text-align:right;top:1066.30px;font-size:16.40px;letter-spacing:0.810px;color:#969696">51</div>
<div class="m" style="left:690px;width:32px;text-align:right;top:1086.73px;font-size:16.40px;letter-spacing:0.810px;color:#969696">52</div>
<div class="m" style="left:776px;top:1086.73px;font-size:16.40px;transform:scaleX(1.0823)"><span style="color:#8000ff;font-weight:bold">ALTER INDEX</span><span style="color:#303030"> ix_emp rebuild</span><span style="color:#008a00">;</span></div>
<div class="m" style="left:690px;width:32px;text-align:right;top:1107.16px;font-size:16.40px;letter-spacing:0.810px;color:#969696">53</div>
<div class="m" style="left:690px;width:32px;text-align:right;top:1127.59px;font-size:16.40px;letter-spacing:0.810px;color:#969696">54</div>
<div class="m" style="left:776px;top:1127.59px;font-size:16.40px;transform:scaleX(1.0823)"><span style="color:#8000ff;font-weight:bold">DROP INDEX IX_EMP_NAME ON</span><span style="color:#303030"> employees</span><span style="color:#008a00">;</span></div>
<div class="m" style="left:690px;width:32px;text-align:right;top:1148.02px;font-size:16.40px;letter-spacing:0.810px;color:#969696">55</div>
<div class="m" style="left:776px;top:1148.02px;font-size:16.40px;transform:scaleX(1.0823)"><span style="color:#d878f0">-- TRIGGERS</span></div>
<div class="m" style="left:690px;width:32px;text-align:right;top:1168.45px;font-size:16.40px;letter-spacing:0.810px;color:#969696">56</div>
<div class="m" style="left:776px;top:1168.45px;font-size:16.40px;transform:scaleX(1.0823)"><span style="color:#d878f0">-----------</span></div>
<div class="m" style="left:690px;width:32px;text-align:right;top:1188.88px;font-size:16.40px;letter-spacing:0.810px;color:#969696">57</div>
<div class="m" style="left:776px;top:1188.88px;font-size:16.40px;transform:scaleX(1.0823)"><span style="color:#8000ff;font-weight:bold">CREATE TRIGGER</span><span style="color:#303030"> trg_emp_upd</span></div>
<div class="m" style="left:690px;width:32px;text-align:right;top:1209.31px;font-size:16.40px;letter-spacing:0.810px;color:#969696">58</div>
<div class="m" style="left:776px;top:1209.31px;font-size:16.40px;transform:scaleX(1.0823)"><span style="color:#008000;font-weight:bold">AFTER UPDATE</span></div>
<div class="m" style="left:690px;width:32px;text-align:right;top:1229.74px;font-size:16.40px;letter-spacing:0.810px;color:#969696">59</div>
<div class="m" style="left:776px;top:1229.74px;font-size:16.40px;transform:scaleX(1.0823)"><span style="color:#008000;font-weight:bold">ON</span><span style="color:#303030"> employees</span></div>
<div class="m" style="left:690px;width:32px;text-align:right;top:1250.17px;font-size:16.40px;letter-spacing:0.810px;color:#969696">60</div>
<div class="m" style="left:776px;top:1250.17px;font-size:16.40px;transform:scaleX(1.0823)"><span style="color:#008000;font-weight:bold">FOR EACH ROW</span></div>
<div class="m" style="left:690px;width:32px;text-align:right;top:1270.60px;font-size:16.40px;letter-spacing:0.810px;color:#969696">61</div>
<div class="m" style="left:776px;top:1270.60px;font-size:16.40px;transform:scaleX(1.0823)"><span style="color:#8000ff;font-weight:bold">INSERT INTO</span><span style="color:#303030"> log</span></div>
<div class="m" style="left:690px;width:32px;text-align:right;top:1291.03px;font-size:16.40px;letter-spacing:0.810px;color:#969696">62</div>
<div class="m" style="left:776px;top:1291.03px;font-size:16.40px;transform:scaleX(1.0823)"><span style="color:#008000;font-weight:bold">VALUES</span><span style="color:#eda032">(   &#x27;Updated&#x27;)</span><span style="color:#2d2d7a">;</span></div>
<div class="m" style="left:690px;width:32px;text-align:right;top:1311.46px;font-size:16.40px;letter-spacing:0.810px;color:#969696">63</div>
<div class="m" style="left:690px;width:32px;text-align:right;top:1331.89px;font-size:16.40px;letter-spacing:0.810px;color:#969696">64</div>
<div class="m" style="left:776px;top:1331.89px;font-size:16.40px;transform:scaleX(1.0823)"><span style="color:#8000ff;font-weight:bold">CREATE OR REPLACE TRIGGER</span><span style="color:#303030"> trg_audit</span></div>
<div class="m" style="left:690px;width:32px;text-align:right;top:1352.32px;font-size:16.40px;letter-spacing:0.810px;color:#969696">65</div>
<div class="m" style="left:776px;top:1352.32px;font-size:16.40px;transform:scaleX(1.0823)"><span style="color:#008000;font-weight:bold">BEFORE INSERT</span></div>
<div class="m" style="left:690px;width:32px;text-align:right;top:1372.75px;font-size:16.40px;letter-spacing:0.810px;color:#969696">66</div>
<div class="m" style="left:776px;top:1372.75px;font-size:16.40px;transform:scaleX(1.0823)"><span style="color:#008000;font-weight:bold">ON</span><span style="color:#303030"> employees</span></div>
<div class="m" style="left:690px;width:32px;text-align:right;top:1393.18px;font-size:16.40px;letter-spacing:0.810px;color:#969696">67</div>
<div class="m" style="left:776px;top:1393.18px;font-size:16.40px;transform:scaleX(1.0823)"><span style="color:#008000;font-weight:bold">FOR EACH ROW</span></div>
<div class="m" style="left:690px;width:32px;text-align:right;top:1413.61px;font-size:16.40px;letter-spacing:0.810px;color:#969696">68</div>
<div class="m" style="left:776px;top:1413.61px;font-size:16.40px;transform:scaleX(1.0823)"><span style="color:#3030b0">BEGIN NULL</span><span style="color:#008a00">;</span></div>
<div class="m" style="left:690px;width:32px;text-align:right;top:1434.04px;font-size:16.40px;letter-spacing:0.810px;color:#969696">69</div>
<div class="m" style="left:690px;width:32px;text-align:right;top:1454.47px;font-size:16.40px;letter-spacing:0.810px;color:#969696">70</div>
<div class="m" style="left:776px;top:1454.47px;font-size:16.40px;transform:scaleX(1.0823)"><span style="color:#3030b0">END</span><span style="color:#2d2d7a">;</span></div>
<div class="m" style="left:690px;width:32px;text-align:right;top:1474.90px;font-size:16.40px;letter-spacing:0.810px;color:#969696">71</div>
<div class="m" style="left:776px;top:1474.90px;font-size:16.40px;transform:scaleX(1.0823)"><span style="color:#8000ff;font-weight:bold">ALTER TRIGGER</span><span style="color:#303030"> trg_emp_upd enable</span><span style="color:#008a00">;</span></div>
<div class="m" style="left:690px;width:32px;text-align:right;top:1495.33px;font-size:16.40px;letter-spacing:0.810px;color:#969696">72</div>
<div class="m" style="left:690px;width:32px;text-align:right;top:1515.76px;font-size:16.40px;letter-spacing:0.810px;color:#969696">73</div>
<div class="m" style="left:776px;top:1515.76px;font-size:16.40px;transform:scaleX(1.0823)"><span style="color:#8000ff;font-weight:bold">DROP TRIGGER</span><span style="color:#303030"> trg_audit</span><span style="color:#2d2d7a">;</span></div>
</body></html>
